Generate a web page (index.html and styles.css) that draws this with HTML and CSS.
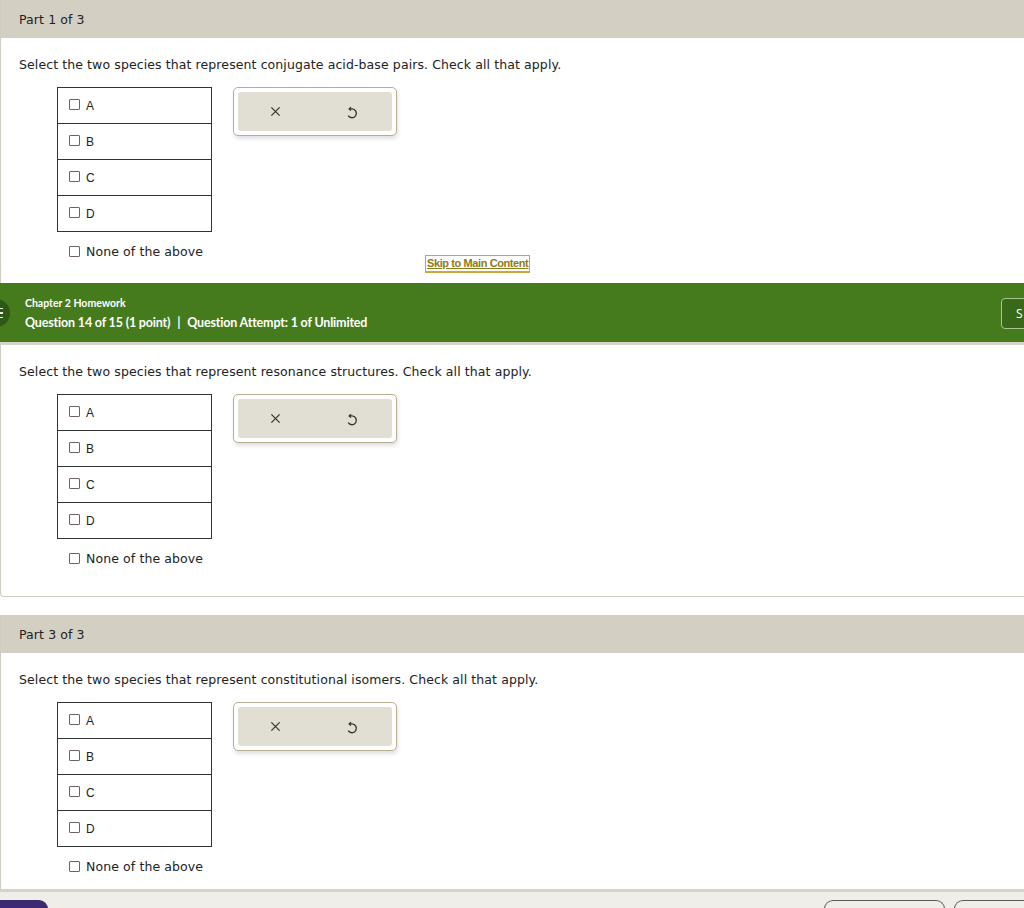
FILE: index.html
```html
<!DOCTYPE html>
<html lang="en">
<head>
    <meta charset="UTF-8">
    <meta name="viewport" content="width=device-width, initial-scale=1.0">
    <title>Chapter 2 Homework - Question 14</title>
    <link rel="stylesheet" href="styles.css">
</head>
<body>
    <div class="part part-first">
        <div class="part-head">Part 1 of 3</div>
        <div class="part-body">
            <p class="prompt">Select the two species that represent conjugate acid-base pairs. Check all that apply.</p>
            <div class="answer-row">
                <ul class="choice-list">
                    <li class="choice"><span class="box"></span>A</li>
                    <li class="choice"><span class="box"></span>B</li>
                    <li class="choice"><span class="box"></span>C</li>
                    <li class="choice"><span class="box"></span>D</li>
                </ul>
                <div class="tools">
                    <div class="tools-inner">
                        <svg class="tool-icon icon-x" viewBox="0 0 12 12"><path d="M1.5 1.5 L10.5 10.5 M10.5 1.5 L1.5 10.5"/></svg>
                        <svg class="tool-icon icon-undo" viewBox="0 0 12 14"><path d="M5 1.2 L3.2 2.9 L5 4.6"/><path d="M3.2 2.9 H6 A4.4 4.4 0 1 1 2.2 9.6"/></svg>
                    </div>
                </div>
            </div>
            <div class="none-choice"><span class="box"></span>None of the above</div>
            <a class="skip-link" href="#main">Skip to Main Content</a>
        </div>
    </div>

    <div class="topbar">
        <div class="menu-btn">
            <span></span><span></span><span></span>
        </div>
        <div class="topbar-text">
            <div class="topbar-title">Chapter 2 Homework</div>
            <div class="topbar-sub">Question 14 of 15 (1 point) <span class="sep">|</span> Question Attempt: 1 of Unlimited</div>
        </div>
        <div class="topbar-btn">S</div>
    </div>

    <div class="part part-mid" id="main">
        <div class="part-body">
            <p class="prompt">Select the two species that represent resonance structures. Check all that apply.</p>
            <div class="answer-row">
                <ul class="choice-list">
                    <li class="choice"><span class="box"></span>A</li>
                    <li class="choice"><span class="box"></span>B</li>
                    <li class="choice"><span class="box"></span>C</li>
                    <li class="choice"><span class="box"></span>D</li>
                </ul>
                <div class="tools">
                    <div class="tools-inner">
                        <svg class="tool-icon icon-x" viewBox="0 0 12 12"><path d="M1.5 1.5 L10.5 10.5 M10.5 1.5 L1.5 10.5"/></svg>
                        <svg class="tool-icon icon-undo" viewBox="0 0 12 14"><path d="M5 1.2 L3.2 2.9 L5 4.6"/><path d="M3.2 2.9 H6 A4.4 4.4 0 1 1 2.2 9.6"/></svg>
                    </div>
                </div>
            </div>
            <div class="none-choice"><span class="box"></span>None of the above</div>
        </div>
    </div>

    <div class="part part-last">
        <div class="part-head">Part 3 of 3</div>
        <div class="part-body">
            <p class="prompt">Select the two species that represent constitutional isomers. Check all that apply.</p>
            <div class="answer-row">
                <ul class="choice-list">
                    <li class="choice"><span class="box"></span>A</li>
                    <li class="choice"><span class="box"></span>B</li>
                    <li class="choice"><span class="box"></span>C</li>
                    <li class="choice"><span class="box"></span>D</li>
                </ul>
                <div class="tools">
                    <div class="tools-inner">
                        <svg class="tool-icon icon-x" viewBox="0 0 12 12"><path d="M1.5 1.5 L10.5 10.5 M10.5 1.5 L1.5 10.5"/></svg>
                        <svg class="tool-icon icon-undo" viewBox="0 0 12 14"><path d="M5 1.2 L3.2 2.9 L5 4.6"/><path d="M3.2 2.9 H6 A4.4 4.4 0 1 1 2.2 9.6"/></svg>
                    </div>
                </div>
            </div>
            <div class="none-choice"><span class="box"></span>None of the above</div>
        </div>
    </div>

    <div class="footer">
        <div class="footer-pill"></div>
        <div class="footer-actions">
            <div class="footer-btn"></div>
            <div class="footer-btn footer-btn-cut"></div>
        </div>
    </div>
</body>
</html>
```

FILE: styles.css
```css
body {
    margin: 0;
    font-family: "DejaVu Sans", Verdana, sans-serif;
    font-size: 12.5px;
    letter-spacing: 0.1px;
    color: #222;
    background: #fff;
    overflow: hidden;
}
.part {
    background: #fff;
    border-left: 1px solid #cfcbbf;
}
.part-mid {
    border-bottom: 1px solid #cfcbbf;
    border-bottom-left-radius: 4px;
    margin-bottom: 18px;
}
.part-last {
    border-bottom: 3px solid #d6d3c9;
}
.part-head {
    height: 38px;
    line-height: 39px;
    padding-left: 18px;
    background: #d3cfc2;
    color: #222;
}
.part-body {
    position: relative;
    padding: 19px 0 0 18px;
}
.part-first .part-body {
    height: 226px;
}
.part-mid .part-body {
    height: 232px;
}
.part-last .part-body {
    height: 217px;
}
.prompt {
    margin: 0 0 14px 0;
    line-height: 16px;
}
.answer-row {
    display: flex;
    align-items: flex-start;
    padding-left: 38px;
}
.choice-list {
    list-style: none;
    margin: 0;
    padding: 0;
    width: 153px;
    border: 1px solid #333;
}
.choice {
    display: flex;
    align-items: center;
    height: 35px;
    padding-left: 11px;
    border-top: 1px solid #333;
    font-family: "Liberation Sans", Arial, sans-serif;
    font-size: 12px;
    letter-spacing: 0;
}
.choice:first-child {
    border-top: none;
}
.box {
    display: inline-block;
    width: 9px;
    height: 9px;
    border: 1.5px solid #6e6262;
    border-radius: 1px;
    margin-right: 6px;
    margin-top: -2px;
}
.tools {
    margin-left: 21px;
    width: 154px;
    height: 39px;
    padding: 4px;
    border: 1px solid #b7ae92;
    border-radius: 5px;
    box-shadow: 1px 3px 4px rgba(0, 0, 0, 0.12);
    background: #fff;
}
.tools-inner {
    display: flex;
    justify-content: space-between;
    align-items: center;
    height: 100%;
    padding: 0 34px 0 32px;
    background: #e1ded4;
    border-radius: 3px;
}
.tool-icon {
    fill: none;
    stroke: #3d3624;
    stroke-width: 1.4;
}
.icon-x {
    width: 11px;
    height: 11px;
}
.icon-undo {
    width: 12px;
    height: 14px;
    margin-top: 2px;
}
.none-choice {
    display: flex;
    align-items: center;
    margin: 12px 0 0 50px;
    height: 14px;
}
.none-choice .box {
    margin-top: 0;
}
.skip-link {
    position: absolute;
    left: 424px;
    top: 217px;
    padding: 0 1px 1px 1px;
    border: 1px solid #c9a93a;
    border-bottom-width: 2px;
    font-family: "Liberation Sans", Arial, sans-serif;
    font-size: 11px;
    font-weight: bold;
    letter-spacing: -0.4px;
    line-height: 14px;
    color: #8d7a17;
    background: #fff;
}
.topbar {
    position: relative;
    display: flex;
    align-items: center;
    height: 59px;
    background: #457b1d;
    border-bottom: 3px solid #d6d4c8;
    color: #fff;
    font-family: Lato, "Open Sans", sans-serif;
    letter-spacing: 0;
}
.menu-btn {
    position: absolute;
    left: -18px;
    top: 16px;
    width: 28px;
    height: 28px;
    border-radius: 50%;
    background: #2f5814;
    display: flex;
    flex-direction: column;
    justify-content: center;
    align-items: flex-end;
    gap: 3px;
    padding-right: 7px;
    box-sizing: border-box;
}
.menu-btn span {
    display: block;
    width: 6px;
    height: 1.5px;
    background: #e8f0de;
}
.topbar-text {
    padding: 2px 0 0 25px;
    flex: 1;
}
.topbar-title {
    font-size: 10.5px;
    font-weight: bold;
    margin-bottom: 6px;
}
.topbar-sub {
    font-size: 12.5px;
    font-weight: bold;
    letter-spacing: -0.17px;
}
.sep {
    margin: 0 4px;
}
.topbar-btn {
    width: 26px;
    height: 29px;
    margin: 2px -19px 0 0;
    padding-left: 14px;
    border: 1px solid #a9c78f;
    border-radius: 4px;
    background: #386818;
    font-family: "Open Sans", sans-serif;
    font-size: 12px;
    line-height: 29px;
}
.footer {
    display: flex;
    justify-content: space-between;
    align-items: flex-end;
    height: 17px;
    background: #efeee9;
}
.footer-pill {
    width: 48px;
    height: 9px;
    background: #3e2a6e;
    border-top-right-radius: 12px;
}
.footer-actions {
    display: flex;
    gap: 9px;
}
.footer-btn {
    width: 119px;
    height: 8px;
    border: 1px solid #5a5a5a;
    border-bottom: none;
    border-radius: 12px 12px 0 0;
}
.footer-btn-cut {
    width: 80px;
    margin-right: -12px;
}
```
